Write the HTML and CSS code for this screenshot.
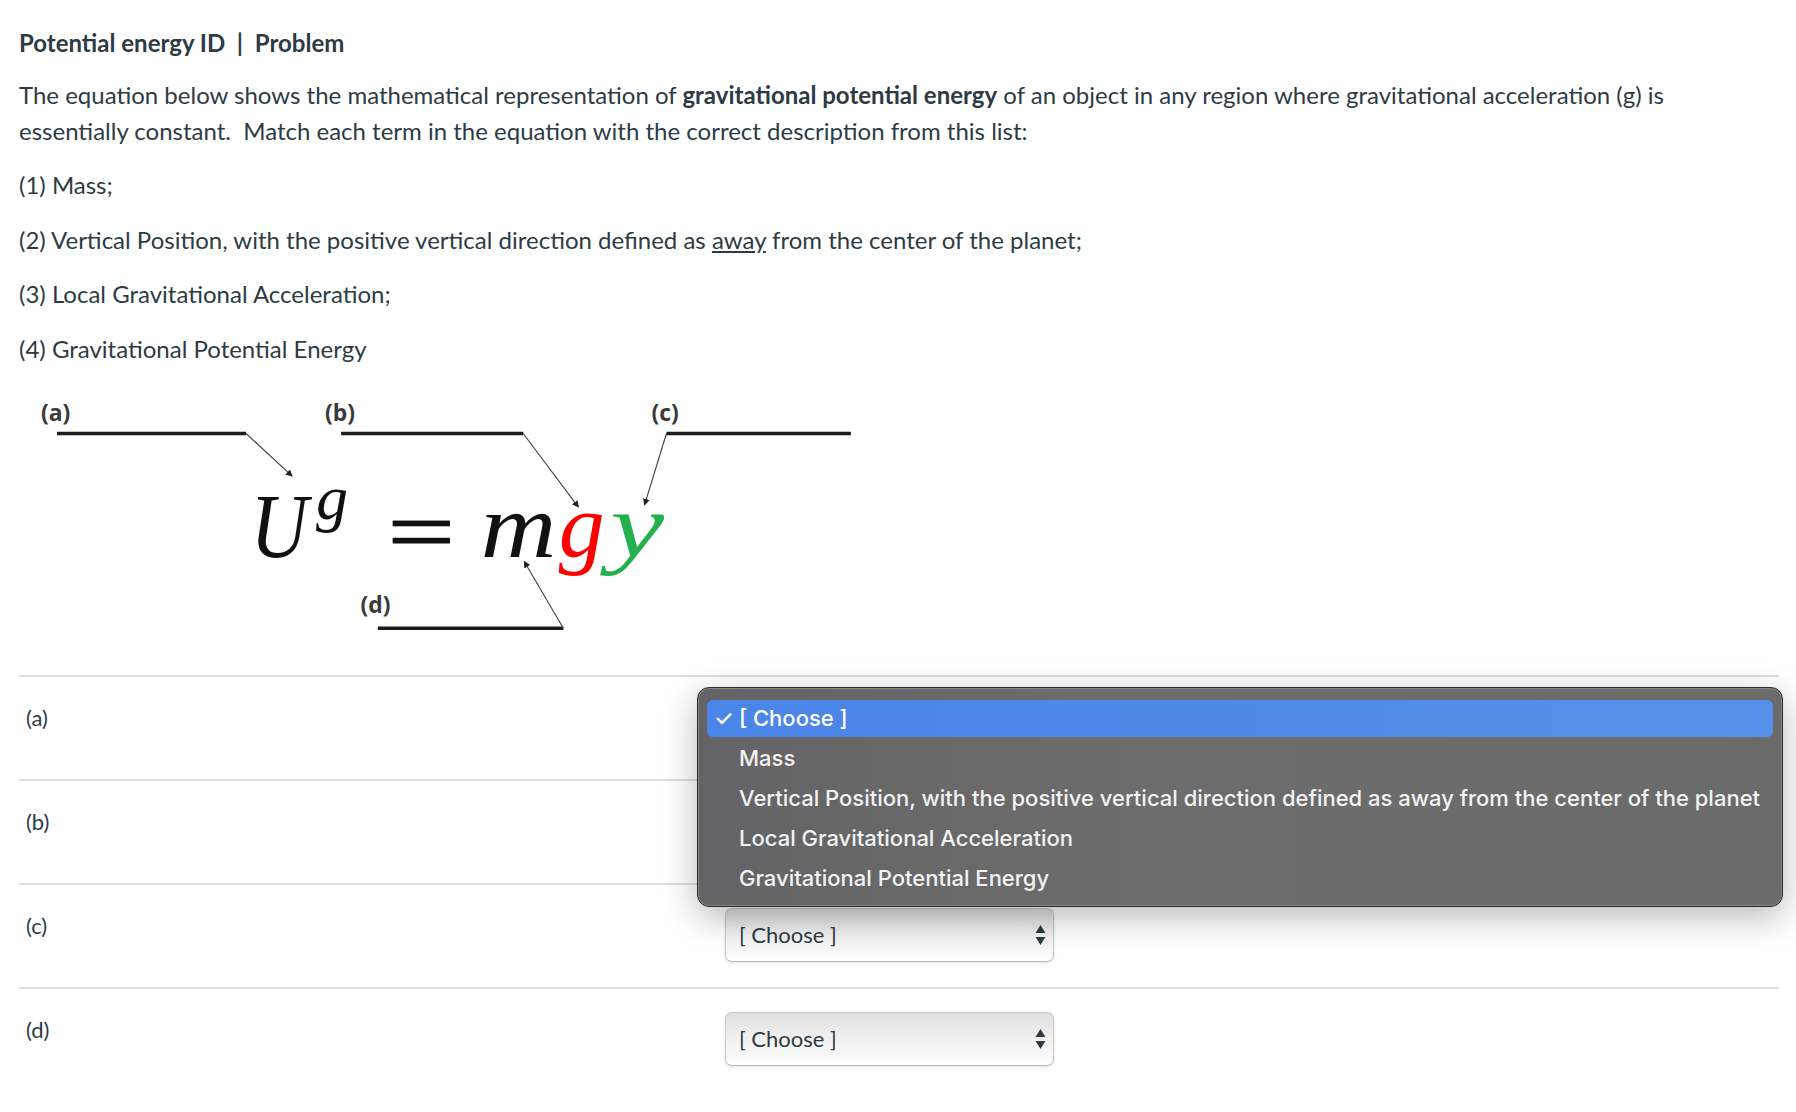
FILE: index.html
```html
<!DOCTYPE html>
<html lang="en">
  <head>
    <meta charset="UTF-8" />
    <meta name="viewport" content="width=device-width, initial-scale=1.0" />
    <title>Potential energy ID | Problem</title>
    <link rel="stylesheet" href="styles.css">
  </head>
  <body>
    <div class="question">
      <div class="question-name">Potential energy ID&nbsp; |&nbsp; Problem</div>

      <div class="question-text">
        <p class="intro">
          The equation below shows the mathematical representation of
          <strong>gravitational potential energy</strong> of an object in any
          region where gravitational acceleration (g) is essentially
          constant.&nbsp; Match each term in the equation with the correct
          description from this list:
        </p>
        <p>(1) Mass;</p>
        <p>
          (2) Vertical Position, with the positive vertical direction defined
          as <u>away</u> from the center of the planet;
        </p>
        <p>(3) Local Gravitational Acceleration;</p>
        <p>(4) Gravitational Potential Energy</p>

        <div class="figure">
          <svg width="825" height="252" viewBox="30 340 720 220">
            <defs>
              <marker id="tip" markerWidth="6" markerHeight="6" refX="5" refY="3" orient="auto" markerUnits="userSpaceOnUse">
                <path d="M0,0 L6,3 L0,6 z" fill="#222" />
              </marker>
            </defs>
            <g class="tag">
              <text x="36" y="367">(a)</text>
              <text x="284" y="367">(b)</text>
              <text x="569" y="367">(c)</text>
              <text x="315" y="535">(d)</text>
            </g>
            <g stroke="#1c1c1c" stroke-width="3">
              <line x1="50" y1="378" x2="215" y2="378" />
              <line x1="298" y1="378" x2="457" y2="378" />
              <line x1="582" y1="378" x2="743" y2="378" />
              <line x1="330" y1="548" x2="492" y2="548" />
            </g>
            <g stroke="#444" stroke-width="1" marker-end="url(#tip)">
              <line x1="215" y1="378" x2="255" y2="415" />
              <line x1="457" y1="378" x2="505" y2="442" />
              <line x1="582" y1="378" x2="563" y2="440" />
              <line x1="492" y1="548" x2="458" y2="490" />
            </g>
            <g class="math">
              <text x="219" y="486" font-size="80" textLength="50" lengthAdjust="spacingAndGlyphs">U</text>
              <text x="276" y="453" font-size="56">g</text>
              <text x="420" y="486" font-size="80" textLength="66" lengthAdjust="spacingAndGlyphs">m</text>
              <text class="red" x="488" y="486" font-size="80">g</text>
              <text class="green" x="533" y="486" font-size="80" textLength="47" lengthAdjust="spacingAndGlyphs">y</text>
            </g>
            <rect x="343" y="454" width="50" height="5" fill="#111" />
            <rect x="343" y="469" width="50" height="5" fill="#111" />
          </svg>
        </div>
      </div>

      <div class="answers">
        <div class="answer-row">
          <div class="answer-label">(a)</div>
          <div class="select-wrap">
            <div class="select">
              [ Choose ]
              <svg class="caret" width="11" height="22" viewBox="0 0 11 22">
                <path d="M5.5,1 L10.5,9 L0.5,9 z M5.5,21 L10.5,13 L0.5,13 z" />
              </svg>
            </div>
            <ul class="dropdown">
              <li class="selected"><span class="check">✓</span>[ Choose ]</li>
              <li>Mass</li>
              <li>Vertical Position, with the positive vertical direction defined as away from the center of the planet</li>
              <li>Local Gravitational Acceleration</li>
              <li>Gravitational Potential Energy</li>
            </ul>
          </div>
        </div>

        <div class="answer-row">
          <div class="answer-label">(b)</div>
          <div class="select-wrap">
            <div class="select">
              [ Choose ]
              <svg class="caret" width="11" height="22" viewBox="0 0 11 22">
                <path d="M5.5,1 L10.5,9 L0.5,9 z M5.5,21 L10.5,13 L0.5,13 z" />
              </svg>
            </div>
          </div>
        </div>

        <div class="answer-row">
          <div class="answer-label">(c)</div>
          <div class="select-wrap">
            <div class="select">
              [ Choose ]
              <svg class="caret" width="11" height="22" viewBox="0 0 11 22">
                <path d="M5.5,1 L10.5,9 L0.5,9 z M5.5,21 L10.5,13 L0.5,13 z" />
              </svg>
            </div>
          </div>
        </div>

        <div class="answer-row">
          <div class="answer-label">(d)</div>
          <div class="select-wrap">
            <div class="select">
              [ Choose ]
              <svg class="caret" width="11" height="22" viewBox="0 0 11 22">
                <path d="M5.5,1 L10.5,9 L0.5,9 z M5.5,21 L10.5,13 L0.5,13 z" />
              </svg>
            </div>
          </div>
        </div>
      </div>
    </div>
  </body>
</html>
```

FILE: styles.css
```css
body {
  margin: 0;
  padding: 25px 17px 0 19px;
  font-family: Lato, "Open Sans", sans-serif;
  font-size: 24px;
  line-height: 35.5px;
  color: #2d3b45;
  background-color: #fff;
}
.question-name {
  font-weight: bold;
  margin-bottom: 16.5px;
}
.question-text p {
  margin: 0 0 19px;
}
.question-text .intro {
  max-width: 1710px;
}
.question-text strong {
  font-weight: bold;
}
.figure {
  margin: 24.3px 0 0 15px;
  height: 252px;
}
.figure svg {
  display: block;
}
.tag text {
  font-family: "Open Sans", sans-serif;
  font-weight: 700;
  font-size: 20px;
  fill: #3a3a3a;
}
.math text {
  font-family: "Liberation Serif", serif;
  font-style: italic;
  fill: #111;
}
.math text.red {
  fill: #ff0000;
}
.math text.green {
  fill: #22b14c;
}
.answers {
  margin-top: 32.7px;
}
.answer-row {
  display: flex;
  align-items: flex-start;
  border-top: 2px solid #dcdcdc;
  padding: 22.7px 0 25.3px;
}
.answer-label {
  width: 706px;
  padding: 3px 0 0 7px;
  box-sizing: border-box;
  line-height: 29px;
  font-size: 22px;
}
.select-wrap {
  position: relative;
}
.select {
  display: flex;
  align-items: center;
  justify-content: space-between;
  width: 329px;
  height: 54px;
  box-sizing: border-box;
  padding: 0 7px 0 13px;
  font-size: 22px;
  border: 1px solid #c8c8c8;
  border-bottom-color: #bababa;
  border-radius: 7px;
  background: linear-gradient(#e0e0e0, #f3f3f3 55%, #fdfdfd);
  box-shadow: 0 1px 3px rgba(0, 0, 0, 0.1);
}
.caret path {
  fill: #2d3b45;
}
.dropdown {
  position: absolute;
  left: -28px;
  top: -12.5px;
  z-index: 10;
  width: 1086px;
  height: 220px;
  box-sizing: border-box;
  margin: 0;
  padding: 11px 9px 9px;
  list-style: none;
  background: linear-gradient(90deg, #646466, #6c6c6c 40%, #6b6b6b);
  border: 1px solid #2b2b2b;
  border-radius: 12px;
  box-shadow: inset 0 0 0 1px #858585, 0 10px 34px rgba(0, 0, 0, 0.28);
  font-family: Inter, "Noto Sans", sans-serif;
  font-size: 22px;
  font-weight: 500;
  color: #f2f2f2;
}
.dropdown li {
  position: relative;
  height: 40px;
  line-height: 40px;
  padding-left: 32px;
  white-space: nowrap;
}
.dropdown li.selected {
  height: 37px;
  line-height: 37px;
  margin-top: 1px;
  margin-bottom: 1px;
  border-radius: 6px;
  background: linear-gradient(90deg, #4a85e8, #5790ea);
  color: #fff;
}
.dropdown .check {
  position: absolute;
  left: 7px;
  font-size: 22px;
}
```
